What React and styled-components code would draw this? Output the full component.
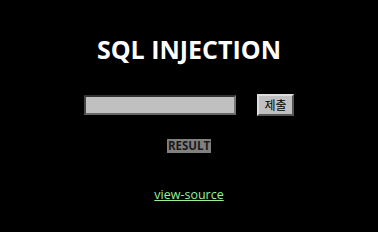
import React from "react";
import styled, { createGlobalStyle } from "styled-components";

const Global = createGlobalStyle`
  html, body { margin: 0; padding: 0; background: #000; }
  body { font-family: "Open Sans", "Noto Sans CJK KR", sans-serif; color: #fff; }
`;

const Page = styled.div`
  width: 378px;
  height: 232px;
  display: flex;
  flex-direction: column;
  align-items: center;
  background: #000;
`;

const Title = styled.h1`
  margin: 32px 0 0;
  font-size: 25px;
  font-weight: 700;
  line-height: 34px;
  color: #fff;
`;

const Form = styled.form`
  margin-top: 28px;
  display: flex;
  align-items: center;
  gap: 21px;
`;

const Input = styled.input`
  box-sizing: border-box;
  width: 152px;
  height: 20px;
  background: #c0c0c0;
  border: 2px solid;
  border-color: #333 #777 #666 #444;
  padding: 0 2px;
  outline: none;
`;

const Button = styled.button`
  box-sizing: border-box;
  height: 22px;
  padding: 0 5px;
  background: #c0c0c0;
  border: 2px solid;
  border-color: #ddd #555 #555 #ddd;
  font-family: "Noto Sans CJK KR", sans-serif;
  font-size: 12px;
  line-height: 16px;
  color: #000;
`;

const Result = styled.div`
  margin-top: 23px;
  background: #808080;
  color: #1a1a1a;
  font-size: 11.5px;
  font-weight: 700;
  line-height: 14px;
  padding: 0 1px;
`;

const Link = styled.a`
  margin-top: 33px;
  color: #98f098;
  font-size: 12.5px;
  line-height: 18px;
  text-decoration: underline;
`;

export default function App() {
  return (
    <>
      <Global />
      <Page>
        <Title>SQL INJECTION</Title>
        <Form onSubmit={(e) => e.preventDefault()}>
          <Input type="text" />
          <Button type="submit">제출</Button>
        </Form>
        <Result>RESULT</Result>
        <Link href="#">view-source</Link>
      </Page>
    </>
  );
}
